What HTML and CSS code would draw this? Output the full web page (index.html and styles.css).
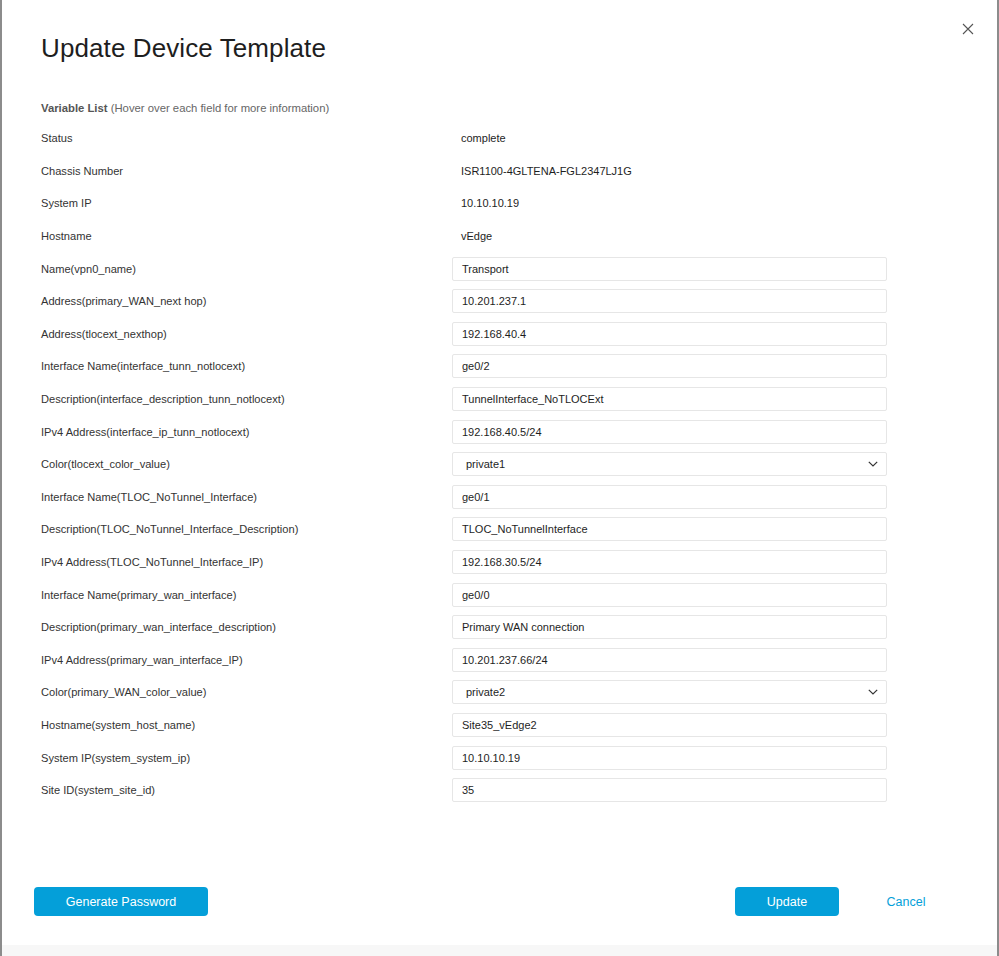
FILE: index.html
```html
<!DOCTYPE html>
<html>
<head>
<meta charset="utf-8">
<title>Update Device Template</title>
<link rel="stylesheet" href="styles.css">
</head>
<body>
<div class="modal">
  <button class="close" aria-label="Close">
    <svg width="12" height="12" viewBox="0 0 12 12"><path d="M1 1L11 11M11 1L1 11" stroke="#555" stroke-width="1.1" fill="none"/></svg>
  </button>
  <div class="content">
    <h1 class="title">Update Device Template</h1>
    <div class="var-head"><b>Variable List</b> (Hover over each field for more information)</div>
    <div class="grid">
      <div class="label">Status</div><div class="value">complete</div>
      <div class="label">Chassis Number</div><div class="value">ISR1100-4GLTENA-FGL2347LJ1G</div>
      <div class="label">System IP</div><div class="value">10.10.10.19</div>
      <div class="label">Hostname</div><div class="value">vEdge</div>
      <div class="label">Name(vpn0_name)</div><div class="field"><div class="input">Transport</div></div>
      <div class="label">Address(primary_WAN_next hop)</div><div class="field"><div class="input">10.201.237.1</div></div>
      <div class="label">Address(tlocext_nexthop)</div><div class="field"><div class="input">192.168.40.4</div></div>
      <div class="label">Interface Name(interface_tunn_notlocext)</div><div class="field"><div class="input">ge0/2</div></div>
      <div class="label">Description(interface_description_tunn_notlocext)</div><div class="field"><div class="input">TunnelInterface_NoTLOCExt</div></div>
      <div class="label">IPv4 Address(interface_ip_tunn_notlocext)</div><div class="field"><div class="input">192.168.40.5/24</div></div>
      <div class="label">Color(tlocext_color_value)</div><div class="field"><div class="input select"><span>private1</span><svg width="10" height="6" viewBox="0 0 10 6"><path d="M0.8 0.8L5 5L9.2 0.8" stroke="#333" stroke-width="1.2" fill="none"/></svg></div></div>
      <div class="label">Interface Name(TLOC_NoTunnel_Interface)</div><div class="field"><div class="input">ge0/1</div></div>
      <div class="label">Description(TLOC_NoTunnel_Interface_Description)</div><div class="field"><div class="input">TLOC_NoTunnelInterface</div></div>
      <div class="label">IPv4 Address(TLOC_NoTunnel_Interface_IP)</div><div class="field"><div class="input">192.168.30.5/24</div></div>
      <div class="label">Interface Name(primary_wan_interface)</div><div class="field"><div class="input">ge0/0</div></div>
      <div class="label">Description(primary_wan_interface_description)</div><div class="field"><div class="input">Primary WAN connection</div></div>
      <div class="label">IPv4 Address(primary_wan_interface_IP)</div><div class="field"><div class="input">10.201.237.66/24</div></div>
      <div class="label">Color(primary_WAN_color_value)</div><div class="field"><div class="input select"><span>private2</span><svg width="10" height="6" viewBox="0 0 10 6"><path d="M0.8 0.8L5 5L9.2 0.8" stroke="#333" stroke-width="1.2" fill="none"/></svg></div></div>
      <div class="label">Hostname(system_host_name)</div><div class="field"><div class="input">Site35_vEdge2</div></div>
      <div class="label">System IP(system_system_ip)</div><div class="field"><div class="input">10.10.10.19</div></div>
      <div class="label">Site ID(system_site_id)</div><div class="field"><div class="input">35</div></div>
    </div>
  </div>
  <div class="footer">
    <button class="btn btn-wide">Generate Password</button>
    <div class="right">
      <button class="btn btn-update">Update</button>
      <button class="link">Cancel</button>
    </div>
  </div>
  <div class="band"></div>
</div>
</body>
</html>
```
FILE: styles.css
```css
html, body {
  margin: 0;
  padding: 0;
  background: #ffffff;
}
body {
  font-family: "Liberation Sans", Arial, sans-serif;
  color: #333;
}
.modal {
  position: relative;
  width: 999px;
  height: 956px;
  box-sizing: border-box;
  border-left: 2px solid #8c8c8c;
  border-right: 2px solid #8c8c8c;
  display: flex;
  flex-direction: column;
  background: #fff;
}
.close {
  position: absolute;
  top: 23px;
  right: 23px;
  width: 12px;
  height: 12px;
  padding: 0;
  border: 0;
  background: none;
  display: flex;
}
.content {
  padding: 33px 0 0 39px;
}
.title {
  margin: 0;
  font-size: 26px;
  line-height: 30px;
  font-weight: 400;
  color: #1e1e1e;
  letter-spacing: 0.1px;
}
.var-head {
  margin-top: 37px;
  font-size: 11.3px;
  line-height: 16px;
  color: #666;
}
.var-head b {
  color: #555;
}
.grid {
  margin-top: 6px;
  display: grid;
  grid-template-columns: 411px 435px;
  grid-auto-rows: 32.6px;
  align-items: center;
}
.label {
  font-size: 11.1px;
  color: #333;
}
.value {
  font-size: 11px;
  color: #1e1e1e;
  padding-left: 9px;
}
.input {
  box-sizing: border-box;
  height: 24px;
  width: 435px;
  border: 1px solid #e6e6e6;
  border-radius: 2px;
  font-size: 11px;
  color: #1e1e1e;
  padding: 0 9px;
  display: flex;
  align-items: center;
}
.select {
  padding-left: 13px;
  justify-content: space-between;
}
.select svg {
  margin-right: -1px;
}
.footer {
  margin-top: auto;
  padding: 0 55px 29px 32px;
  display: flex;
  justify-content: space-between;
  align-items: center;
}
.right {
  display: flex;
  align-items: center;
  gap: 31px;
}
.btn {
  height: 29px;
  border: 0;
  border-radius: 4px;
  background: #049fd9;
  color: #fff;
  font-family: "Liberation Sans", Arial, sans-serif;
  font-size: 12.5px;
  padding: 0;
}
.btn-wide {
  width: 174px;
}
.btn-update {
  width: 104px;
}
.link {
  width: 72px;
  border: 0;
  background: none;
  color: #049fd9;
  font-family: "Liberation Sans", Arial, sans-serif;
  font-size: 12.5px;
  padding: 0;
}
.band {
  height: 11px;
  background: #f7f7f7;
}
```
